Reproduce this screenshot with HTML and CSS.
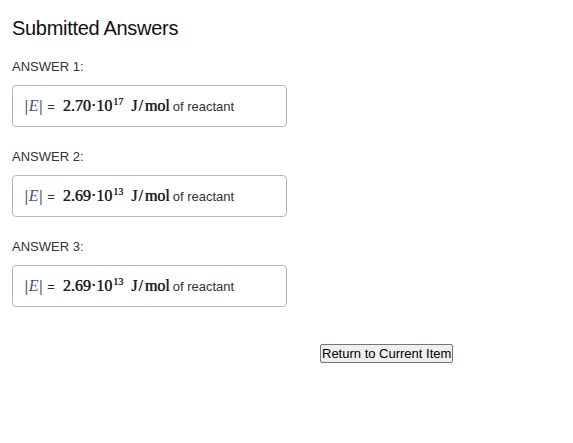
FILE: index.html
```html
<!DOCTYPE html>
<html>
<head>
<meta charset="utf-8">
<link rel="stylesheet" href="styles.css">
</head>
<body>
<div class="page">
  <h2 class="title">Submitted Answers</h2>
  <div class="answer">
    <div class="label">ANSWER 1:</div>
    <div class="box"><span class="abs">|<i>E</i>|</span><span class="eq">=</span><span class="num">2.70·10<sup>17</sup></span><span class="unit">J<span class="slash">/</span>mol</span><span class="tail">of reactant</span></div>
  </div>
  <div class="answer">
    <div class="label">ANSWER 2:</div>
    <div class="box"><span class="abs">|<i>E</i>|</span><span class="eq">=</span><span class="num">2.69·10<sup>13</sup></span><span class="unit">J<span class="slash">/</span>mol</span><span class="tail">of reactant</span></div>
  </div>
  <div class="answer">
    <div class="label">ANSWER 3:</div>
    <div class="box"><span class="abs">|<i>E</i>|</span><span class="eq">=</span><span class="num">2.69·10<sup>13</sup></span><span class="unit">J<span class="slash">/</span>mol</span><span class="tail">of reactant</span></div>
  </div>
  <div class="actions">
    <button class="btn">Return to Current Item</button>
  </div>
</div>
</body>
</html>
```
FILE: styles.css
```css
html, body { margin: 0; padding: 0; background: #fff; }
body { font-family: "Liberation Sans", Arial, sans-serif; color: #222; }
.page { padding: 17px 12px 0 12px; }
.title { font-size: 20px; font-weight: normal; margin: 0 0 19px 0; color: #111; line-height: 23px; letter-spacing: -0.3px; }
.answer { margin-bottom: 22px; }
.label { font-size: 13px; color: #333; line-height: 15px; margin-bottom: 11px; }
.box { width: 262px; height: 40px; border: 1px solid #b5b5b5; border-radius: 4px; display: flex; align-items: center; padding-left: 11px; box-sizing: content-box; font-size: 13px; color: #333; white-space: nowrap; }
.abs { font-family: "DejaVu Serif", "Liberation Serif", serif; font-size: 14px; color: #4a5470; }
.abs i { font-family: "Liberation Serif", serif; font-size: 16px; }
.eq { margin: 0 8px 0 4px; font-size: 13px; }
.num { font-family: "Liberation Serif", serif; font-size: 16px; color: #222; }
.num, .unit { font-weight: normal; text-shadow: 0.35px 0 0 #222; }
.num sup { font-size: 10px; vertical-align: 6px; line-height: 0; margin-left: 1px; }
.unit { font-family: "Liberation Serif", serif; font-size: 16px; margin-left: 8px; margin-right: 3px; color: #222; }
.slash { margin: 0 2px 0 1px; }
.tail { font-size: 13px; color: #333; }
.actions { padding-left: 308px; padding-top: 15px; }
.btn { font-family: "Liberation Sans", Arial, sans-serif; font-size: 13px; color: #000; background: #efefef; border: 1px solid #767676; border-radius: 2px; padding: 1px 1px; height: 19px; line-height: 15px; }
```
